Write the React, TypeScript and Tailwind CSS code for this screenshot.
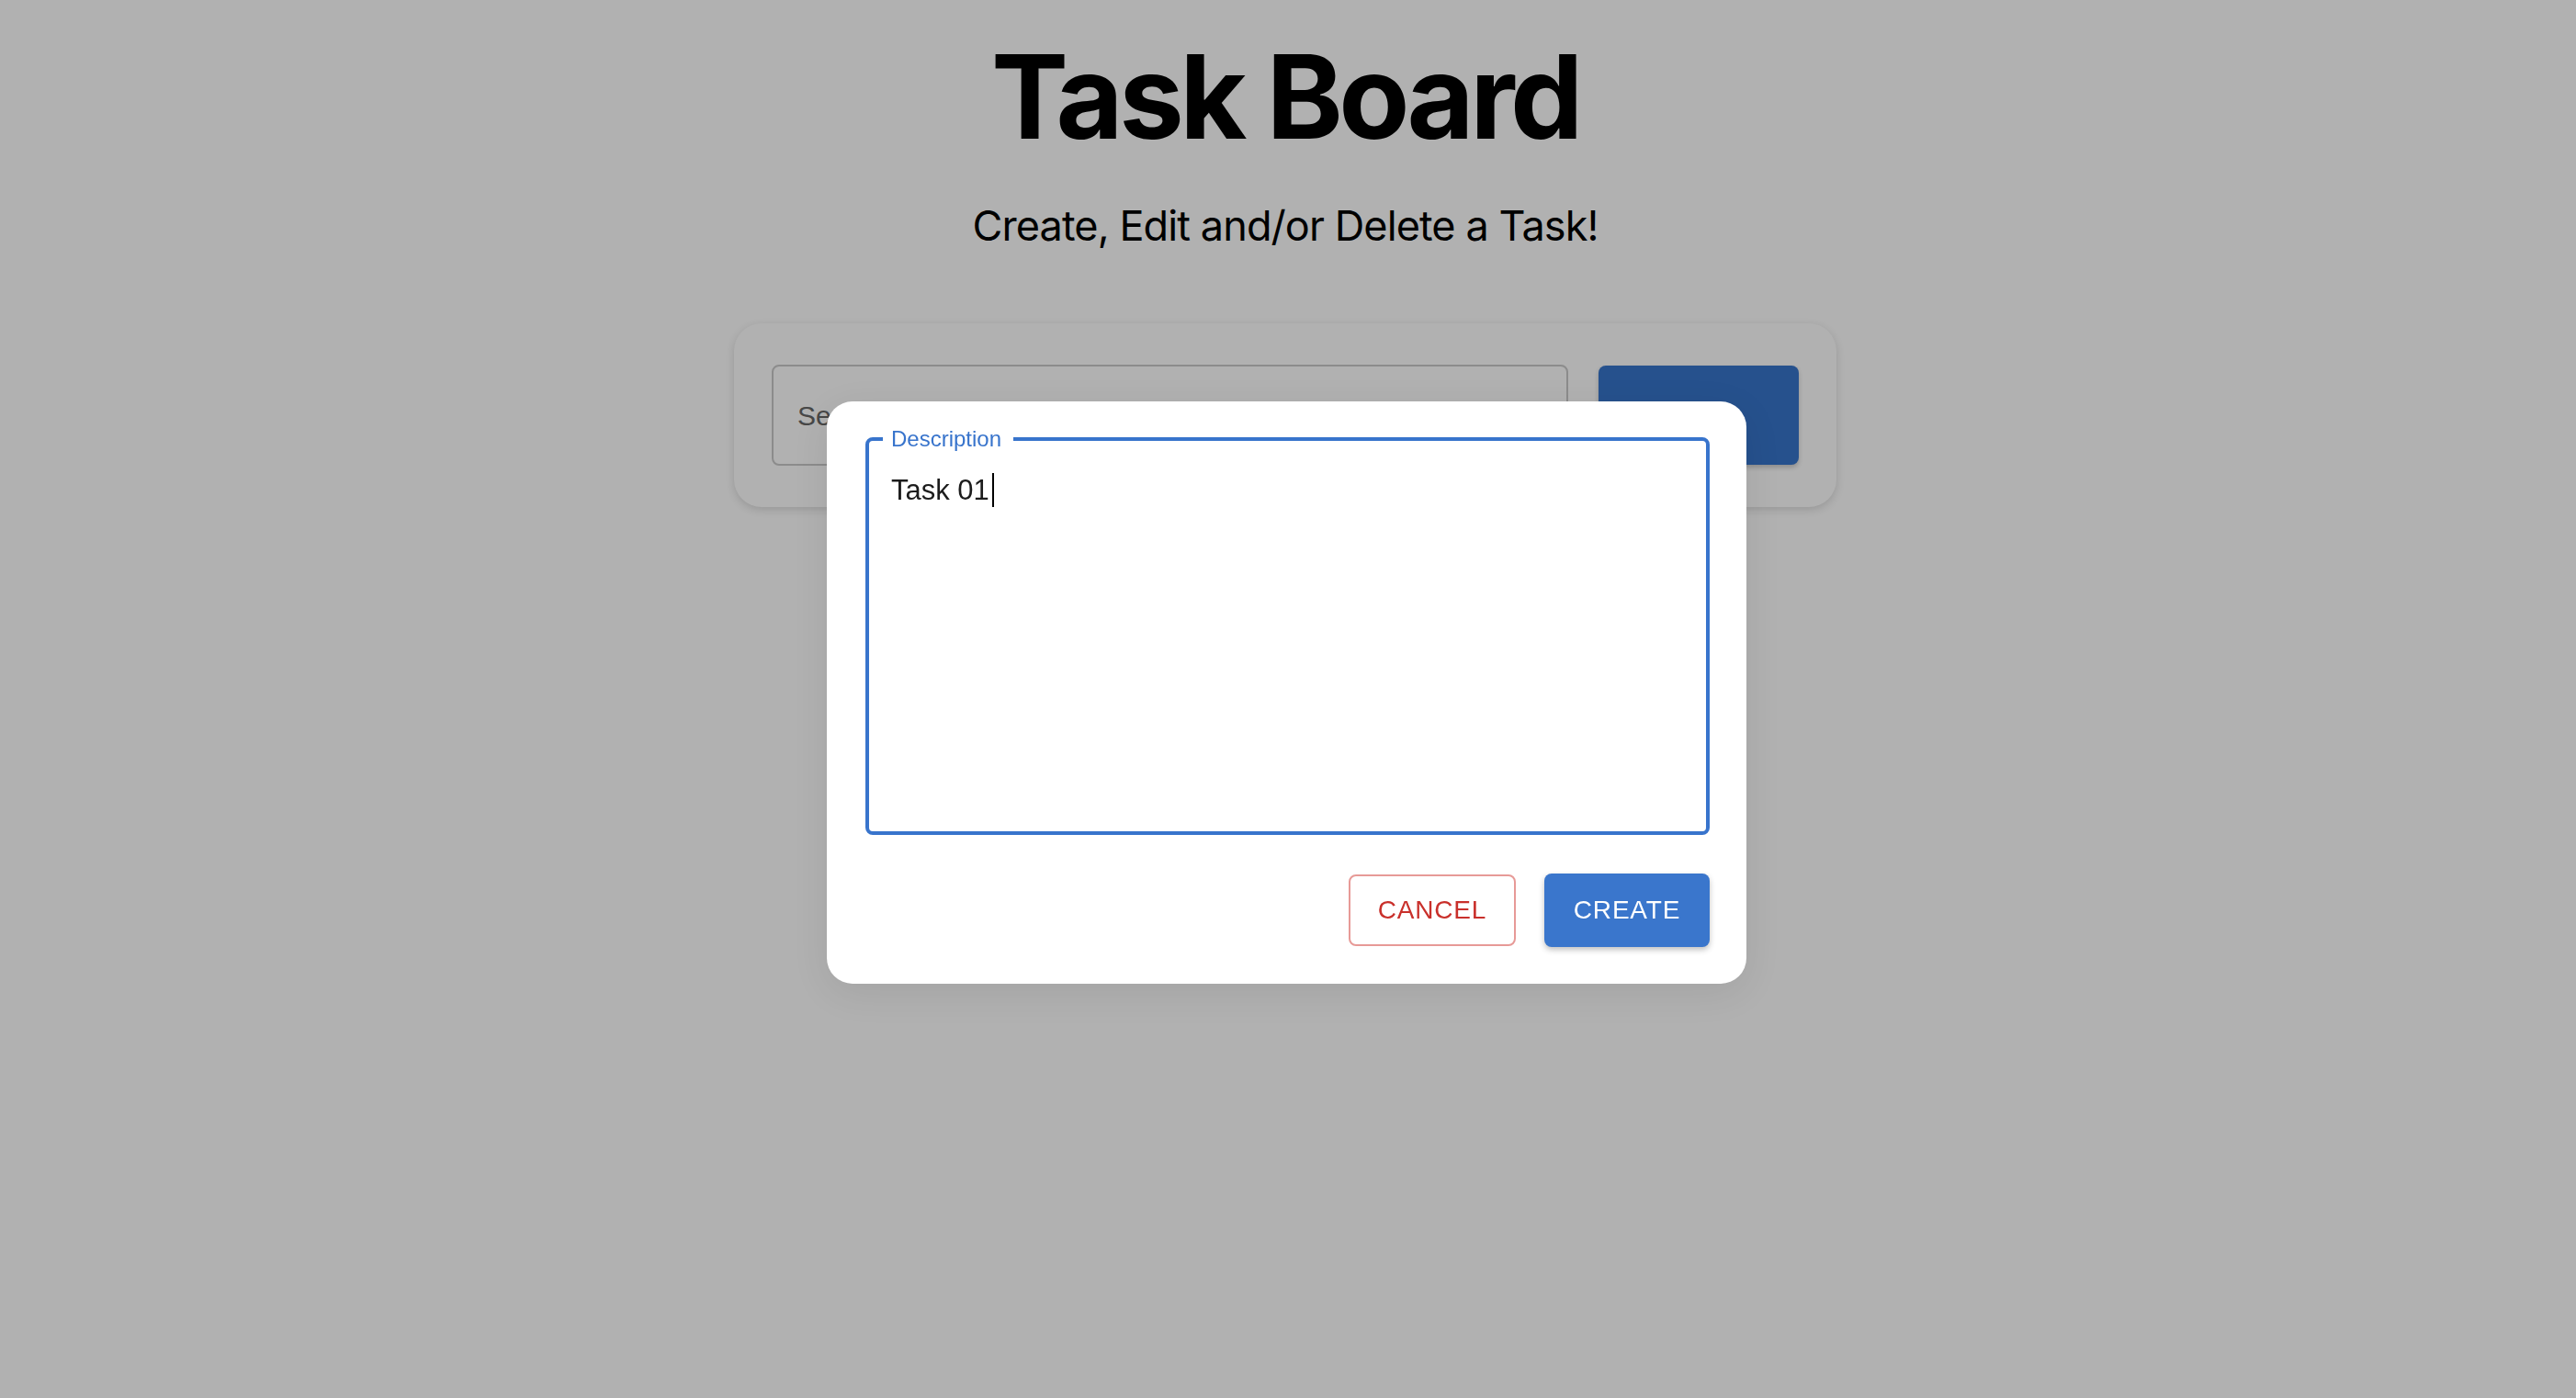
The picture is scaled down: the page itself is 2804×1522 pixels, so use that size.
export default function App() {
  return (
    <div className="relative min-h-[1522px] w-full bg-[#b1b1b1] font-['Inter',sans-serif]">
      {/* Page behind the dialog */}
      <div className="flex flex-col items-center pr-[6px] pt-[42px]">
        <h1 className="text-[126px] font-bold leading-none tracking-[-0.035em] text-black">Task Board</h1>
        <p className="mt-[55px] text-[45px] leading-none tracking-[-0.02em] text-black">
          Create, Edit and/or Delete a Task!
        </p>

        <div className="mt-[84px] flex w-[1200px] items-center gap-[33px] rounded-[30px] bg-[#b1b1b1] px-[41px] py-[45px] shadow-[0_3px_10px_rgba(0,0,0,0.14)]">
          <div className="flex h-[110px] flex-1 items-center rounded-[8px] border-2 border-[#8c8c8c] pl-[26px] font-['Liberation_Sans',Arial,sans-serif] text-[30px] text-[#474747]">
            Search a task...
          </div>
          <button className="h-[108px] w-[218px] rounded-[8px] bg-[#26518d] font-['Liberation_Sans',Arial,sans-serif] text-[28px] tracking-[0.8px] text-[#b8c4d6] shadow-[0_3px_5px_rgba(0,0,0,0.2)]">
            ADD
          </button>
        </div>
      </div>

      {/* Dialog */}
      <div className="fixed inset-0 flex items-start justify-center pt-[437px]">
        <div className="ml-[-3px] w-[1001px] rounded-[28px] bg-white pb-[40px] pl-[42px] pr-[40px] pt-[29px] font-['Liberation_Sans',Arial,sans-serif] shadow-[0_10px_40px_rgba(0,0,0,0.08)]">
          <fieldset className="h-[443px] rounded-[8px] border-4 border-[#3874cc] pl-[15px] pt-[25px]">
            <legend className="pl-[9px] pr-[13px] text-[24px] leading-none text-[#3874cc]">Description</legend>
            <div className="ml-[9px] flex items-center text-[31px] leading-none text-[#1c1c1c]">
              Task 01
              <span className="ml-[3px] inline-block h-[37px] w-[2px] bg-black" />
            </div>
          </fieldset>

          <div className="mt-[42px] flex items-center justify-end gap-[31px]">
            <button className="h-[78px] w-[182px] rounded-[8px] border-2 border-[#e79a97] text-[28px] tracking-[0.8px] text-[#c9302b]">
              CANCEL
            </button>
            <button className="h-[80px] w-[180px] rounded-[8px] bg-[#3a76cc] text-[28px] tracking-[0.8px] text-white shadow-[0_3px_6px_rgba(0,0,0,0.25)]">
              CREATE
            </button>
          </div>
        </div>
      </div>
    </div>
  )
}
